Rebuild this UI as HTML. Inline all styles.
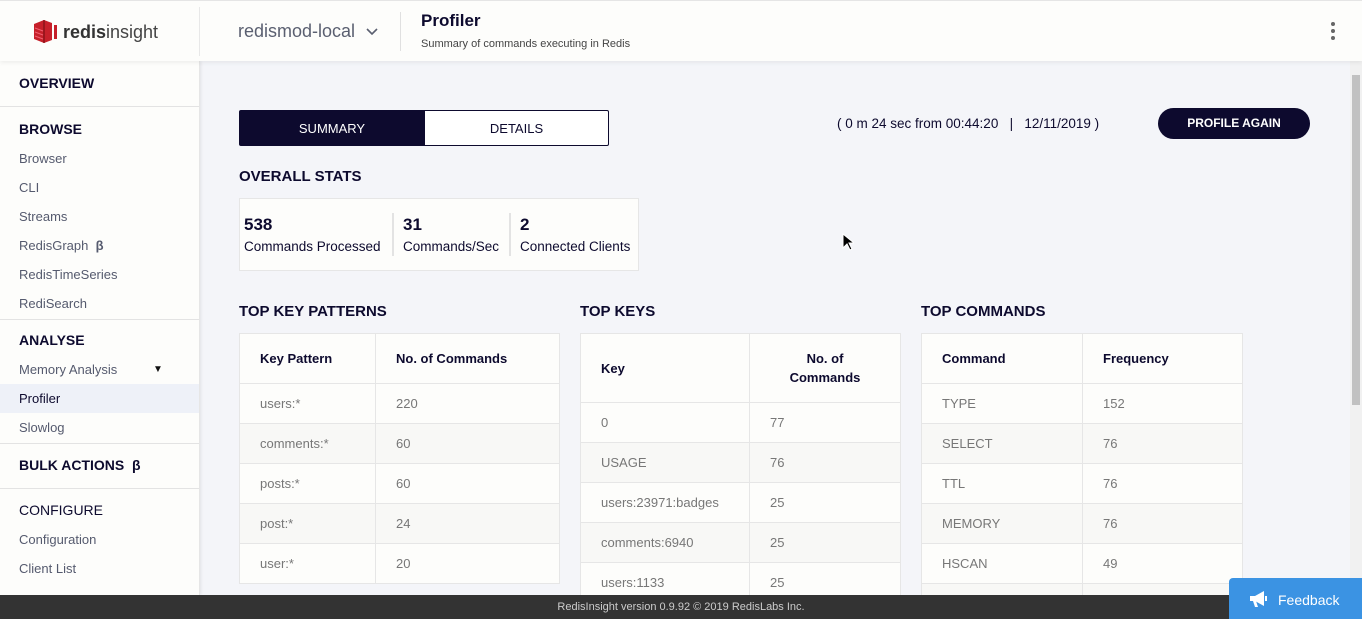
<!DOCTYPE html>
<html><head><meta charset="utf-8"><style>
*{box-sizing:border-box;margin:0;padding:0}
html{overflow:hidden;width:1362px;height:619px}
body{width:1362px;height:619px;overflow:hidden;background:#f4f5f9;font-family:"Liberation Sans",sans-serif;color:#0d0a2e;position:relative}
.hdr{position:absolute;left:0;top:0;width:1362px;height:61px;background:#fdfdfb;border-top:1px solid #e5e5e5;box-shadow:0 2px 4px rgba(0,0,0,.06);z-index:2}
.side{position:absolute;left:0;top:61px;width:200px;height:534px;background:#fdfdfb;border-right:1px solid #e6e6e6;box-shadow:1px 0 3px rgba(0,0,0,.08)}
.side .sec{border-bottom:1px solid #e3e3e3}
.side .h{font-weight:bold;font-size:14px;padding:0 19px;height:29px;line-height:29px;color:#0d0a2e}
.side .i{font-size:13px;color:#555a6e;padding:0 19px;height:29px;line-height:29px}
.side .act{background:#eef1f8;color:#0d0a2e}
.abs{position:absolute}
table{border-collapse:collapse;background:#fdfdfb;position:absolute;font-size:13px}
td,th{border:1px solid #e6e6e6;text-align:left;padding:0 0 0 20px;height:40px;color:#777}
th{color:#0d0a2e;font-weight:bold;height:50px}
tr:nth-child(odd) td{background:#f8f8f6}
.t{font-weight:bold;font-size:15px;position:absolute}
</style></head><body>
<div class="hdr">
 <svg class="abs" style="left:32px;top:18px" width="28" height="24" viewBox="0 0 28 24"><path d="M2 5L12 1 20 4 20 21 12 24 2 20Z" fill="#c6202a"/><path d="M12 1L12 24" stroke="#8c1219" stroke-width="1.5"/><path d="M3 9L11 12M3 13L11 16M3 17L11 20" stroke="#f06070" stroke-width="1"/><rect x="22" y="6" width="3" height="14" fill="#c6202a"/></svg>
 <div class="abs" style="left:63px;top:21px;font-size:18px;color:#444"><b style="color:#333">redis</b>insight</div>
 <div class="abs" style="left:199px;top:6px;width:1px;height:49px;background:#e8e8e8"></div>
 <div class="abs" style="left:238px;top:20px;font-size:18px;color:#5a5f70">redismod-local</div>
 <svg class="abs" style="left:366px;top:27px" width="12" height="8"><path d="M1 1L6 6 11 1" stroke="#5a5f70" stroke-width="1.6" fill="none"/></svg>
 <div class="abs" style="left:400px;top:11px;width:1px;height:39px;background:#e0e0e0"></div>
 <div class="abs" style="left:421px;top:10px;font-size:17px;font-weight:bold">Profiler</div>
 <div class="abs" style="left:421px;top:37px;font-size:11px;color:#444">Summary of commands executing in Redis</div>
 <div class="abs" style="left:1331px;top:21px;width:4px;height:4px;border-radius:2px;background:#666;box-shadow:0 7px 0 #666,0 14px 0 #666"></div>
</div>
<div class="side">
 <div class="sec" style="padding:8px 0 8px"><div class="h">OVERVIEW</div></div>
 <div class="sec" style="padding:8px 0 1px"><div class="h">BROWSE</div><div class="i">Browser</div><div class="i">CLI</div><div class="i">Streams</div><div class="i">RedisGraph &nbsp;<b>β</b></div><div class="i">RedisTimeSeries</div><div class="i">RediSearch</div></div>
 <div class="sec" style="padding:6px 0 1px"><div class="h">ANALYSE</div><div class="i">Memory Analysis<span style="position:absolute;left:153px;font-size:10px;color:#111">▼</span></div><div class="i act">Profiler</div><div class="i">Slowlog</div></div>
 <div class="sec" style="padding:7px 0 8px"><div class="h">BULK ACTIONS &nbsp;β</div></div>
 <div class="sec" style="border:none;padding-top:7px"><div class="h" style="font-weight:normal">CONFIGURE</div><div class="i">Configuration</div><div class="i">Client List</div></div>
</div>
<div class="abs" style="left:239px;top:110px;width:186px;height:36px;background:#0d0a2e;color:#fff;font-size:13px;text-align:center;line-height:38px;border-radius:2px 0 0 2px">SUMMARY</div>
<div class="abs" style="left:424px;top:110px;width:185px;height:36px;border:1px solid #0d0a2e;background:#fff;font-size:13px;text-align:center;line-height:36px;border-radius:0 2px 2px 0">DETAILS</div>
<div class="abs" style="left:837px;top:116px;font-size:13.5px">( 0 m 24 sec from 00:44:20 &nbsp;&nbsp;| &nbsp;&nbsp;12/11/2019 )</div>
<div class="abs" style="left:1158px;top:108px;width:152px;height:31px;background:#0d0a2e;color:#fff;border-radius:16px;font-size:12px;font-weight:bold;text-align:center;line-height:31px">PROFILE AGAIN</div>
<div class="t" style="left:239px;top:168px">OVERALL STATS</div>
<div class="abs" style="left:239px;top:198px;width:400px;height:73px;background:#fdfdfb;border:1px solid #e6e6e6"></div>
<div class="abs" style="left:244px;top:215px;font-size:17px;font-weight:bold">538</div><div class="abs" style="left:244px;top:239px;font-size:13.5px">Commands Processed</div>
<div class="abs" style="left:392px;top:213px;width:2px;height:43px;background:#e3e3e3"></div>
<div class="abs" style="left:403px;top:215px;font-size:17px;font-weight:bold">31</div><div class="abs" style="left:403px;top:239px;font-size:13.5px">Commands/Sec</div>
<div class="abs" style="left:509px;top:213px;width:2px;height:43px;background:#e3e3e3"></div>
<div class="abs" style="left:520px;top:215px;font-size:17px;font-weight:bold">2</div><div class="abs" style="left:520px;top:239px;font-size:13.5px">Connected Clients</div>
<div class="t" style="left:239px;top:303px">TOP KEY PATTERNS</div>
<div class="t" style="left:580px;top:303px">TOP KEYS</div>
<div class="t" style="left:921px;top:303px">TOP COMMANDS</div>
<table style="left:239px;top:333px;width:321px"><tr><th style="width:136px">Key Pattern</th><th>No. of Commands</th></tr>
<tr><td>users:*</td><td>220</td></tr><tr><td>comments:*</td><td>60</td></tr><tr><td>posts:*</td><td>60</td></tr><tr><td>post:*</td><td>24</td></tr><tr><td>user:*</td><td>20</td></tr></table>
<table style="left:580px;top:333px;width:321px"><tr><th style="width:169px;height:69px">Key</th><th style="text-align:center;padding:0;line-height:19px">No. of<br>Commands</th></tr>
<tr><td>0</td><td>77</td></tr><tr><td>USAGE</td><td>76</td></tr><tr><td>users:23971:badges</td><td>25</td></tr><tr><td>comments:6940</td><td>25</td></tr><tr><td>users:1133</td><td>25</td></tr></table>
<table style="left:921px;top:333px;width:322px"><tr><th style="width:161px">Command</th><th>Frequency</th></tr>
<tr><td>TYPE</td><td>152</td></tr><tr><td>SELECT</td><td>76</td></tr><tr><td>TTL</td><td>76</td></tr><tr><td>MEMORY</td><td>76</td></tr><tr><td>HSCAN</td><td>49</td></tr><tr><td></td><td></td></tr></table>
<div class="abs" style="left:1350px;top:61px;width:12px;height:534px;background:#f1f1f1"></div>
<div class="abs" style="left:1352px;top:75px;width:8px;height:330px;background:#c1c1c1"></div>
<div class="abs" style="left:0;top:595px;width:1362px;height:24px;background:#333;color:#ccc;font-size:11px;text-align:center;line-height:24px;z-index:3">RedisInsight version 0.9.92 © 2019 RedisLabs Inc.</div>
<div class="abs" style="left:1229px;top:578px;width:133px;height:41px;background:#3b93e3;border-radius:4px 0 0 0;color:#fff;font-size:14px;line-height:44px;padding-left:49px;z-index:4">Feedback</div>
<svg class="abs" style="left:1249px;top:590px;z-index:5" width="22" height="18" viewBox="0 0 22 18"><path d="M1 6h5l9-5v15l-9-5H1z" fill="#fff"/><path d="M4 11l2 6h3l-2-6" fill="#fff"/><path d="M17 6v5" stroke="#fff" stroke-width="2"/></svg>
<svg class="abs" style="left:842px;top:233px" width="12" height="18"><path d="M1 1v14l4-4 3 6 2-1-3-6h5z" fill="#000" stroke="#fff"/></svg>
</body></html>
